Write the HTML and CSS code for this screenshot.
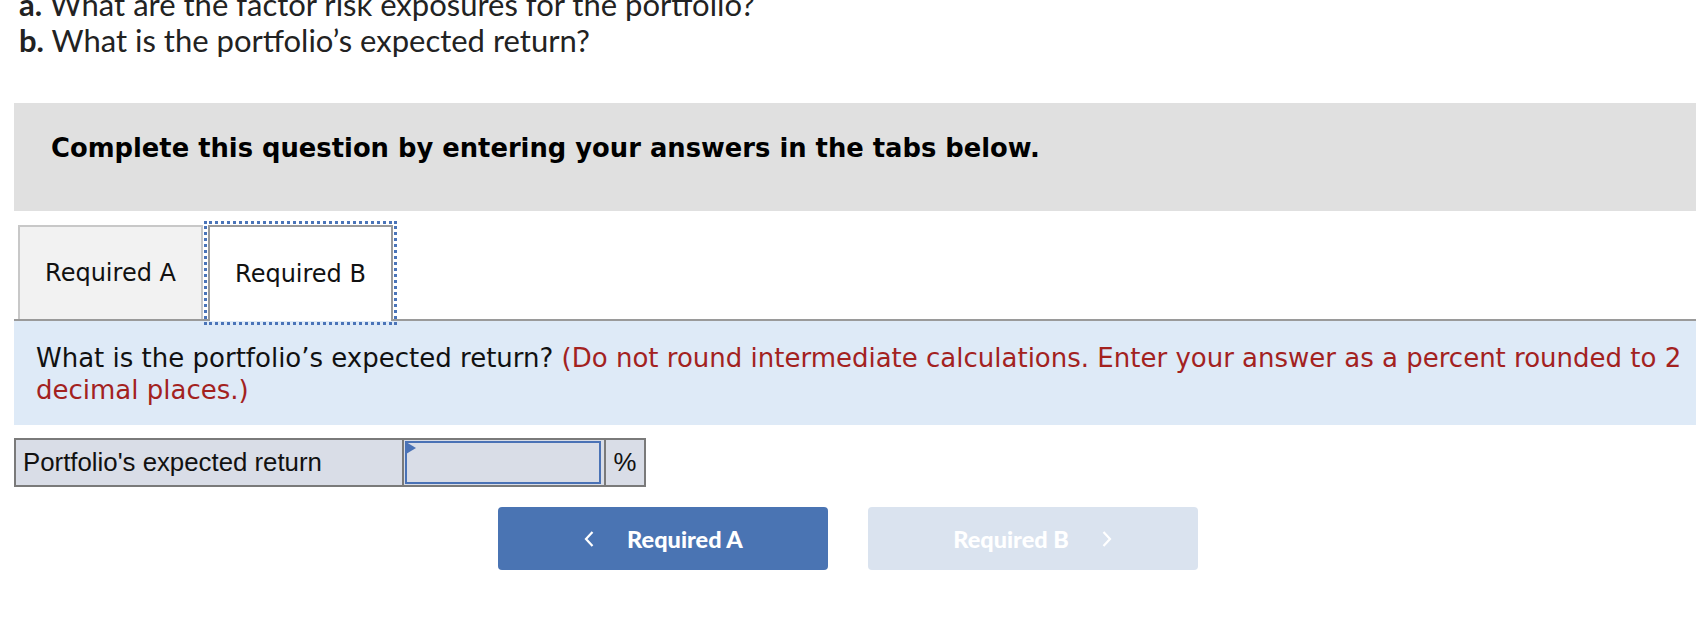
FILE: index.html
```html
<!DOCTYPE html>
<html>
<head>
<meta charset="utf-8">
<link rel="stylesheet" href="styles.css">
</head>
<body>
<div class="page">
  <div class="intro">
    <p class="q"><b>a.</b> What are the factor risk exposures for the portfolio?</p>
    <p class="q"><b>b.</b> What is the portfolio’s expected return?</p>
  </div>

  <div class="banner">Complete this question by entering your answers in the tabs below.</div>

  <div class="tabs">
    <div class="tab tab-off">Required A</div>
    <div class="tab tab-on">Required B</div>
  </div>

  <div class="prompt">
    What is the portfolio’s expected return? <span class="hint">(Do not round intermediate calculations. Enter your answer as a percent rounded to 2 decimal places.)</span>
  </div>

  <div class="answer">
    <div class="cell label">Portfolio's expected return</div>
    <div class="cell input"><span class="flag"></span></div>
    <div class="cell unit">%</div>
  </div>

  <div class="nav">
    <div class="btn btn-prev">
      <svg class="chev" width="12" height="20" viewBox="0 0 12 20"><polyline points="9.5,3 3,10 9.5,17" fill="none" stroke="#ffffff" stroke-width="2.2"/></svg>
      <span>Required A</span>
    </div>
    <div class="btn btn-next">
      <span>Required B</span>
      <svg class="chev" width="12" height="20" viewBox="0 0 12 20"><polyline points="2.5,3 9,10 2.5,17" fill="none" stroke="#ffffff" stroke-width="2.2"/></svg>
    </div>
  </div>
</div>
</body>
</html>
```

FILE: styles.css
```css
html, body {
  margin: 0;
  padding: 0;
  background: #ffffff;
  overflow: hidden;
}

.page {
  padding-left: 14px;
  width: 1682px;
}

.intro {
  margin-top: -14px;
  padding-left: 5px;
  font-family: "Lato", "Open Sans", sans-serif;
  font-size: 31px;
  line-height: 36px;
  color: #222222;
}

.intro .q {
  margin: 0;
}

.intro b {
  font-weight: 700;
}

.banner {
  margin-top: 45px;
  height: 108px;
  box-sizing: border-box;
  padding: 29px 0 0 37px;
  background: #e0e0e0;
  font-family: "DejaVu Sans", Verdana, sans-serif;
  font-weight: bold;
  font-size: 25.8px;
  line-height: 32px;
  color: #000000;
}

.tabs {
  display: flex;
  margin-top: 14px;
  padding-left: 4px;
  border-bottom: 2px solid #9a9a9a;
  height: 94px;
}

.tab {
  box-sizing: border-box;
  height: 94px;
  display: flex;
  align-items: center;
  justify-content: center;
  font-family: "DejaVu Sans", Verdana, sans-serif;
  font-size: 24px;
  color: #111111;
}

.tab-off {
  width: 185px;
  background: #f2f2f2;
  border: 2px solid #c8c8c8;
  border-bottom: none;
}

.tab-on {
  width: 185px;
  margin-left: 5px;
  background: #ffffff;
  border: 2px solid #9a9a9a;
  border-bottom: none;
  outline: 3px dotted #4a74b8;
  outline-offset: 1px;
  position: relative;
  z-index: 1;
  height: 96px;
}

.prompt {
  background: #deeaf7;
  padding: 21px 4px 20px 22px;
  font-family: "DejaVu Sans", Verdana, sans-serif;
  font-size: 26px;
  line-height: 32px;
  color: #111111;
  height: 104px;
  box-sizing: border-box;
}

.hint {
  color: #a3221f;
}

.answer {
  display: flex;
  margin-top: 13px;
  width: 632px;
  height: 49px;
  box-sizing: border-box;
  border: 2px solid #7a7a7a;
  background: #d9dde7;
}

.cell {
  box-sizing: border-box;
  display: flex;
  align-items: center;
  font-family: "Liberation Sans", Arial, sans-serif;
  font-size: 25.8px;
  color: #111111;
}

.label {
  width: 388px;
  padding-left: 7px;
  border-right: 2px solid #7a7a7a;
}

.input {
  width: 196px;
  border: 2px solid #4a72b6;
  margin: 1px 3px 1px 1px;
  position: relative;
}

.flag {
  position: absolute;
  left: -1px;
  top: -1px;
  width: 0;
  height: 0;
  border-top: 6px solid transparent;
  border-bottom: 6px solid transparent;
  border-left: 10px solid #4a72b6;
}

.unit {
  flex: 1;
  justify-content: center;
  border-left: 2px solid #7a7a7a;
}

.nav {
  display: flex;
  gap: 40px;
  margin-top: 20px;
  padding-left: 484px;
}

.btn {
  width: 330px;
  height: 63px;
  border-radius: 4px;
  display: flex;
  align-items: center;
  justify-content: center;
  gap: 32px;
  font-family: "Lato", "Open Sans", sans-serif;
  font-weight: 900;
  font-size: 23.5px;
  color: #ffffff;
}

.btn-prev {
  background: #4a74b3;
}

.btn-next {
  background: #dae3ef;
}

.chev {
  display: block;
}
```
